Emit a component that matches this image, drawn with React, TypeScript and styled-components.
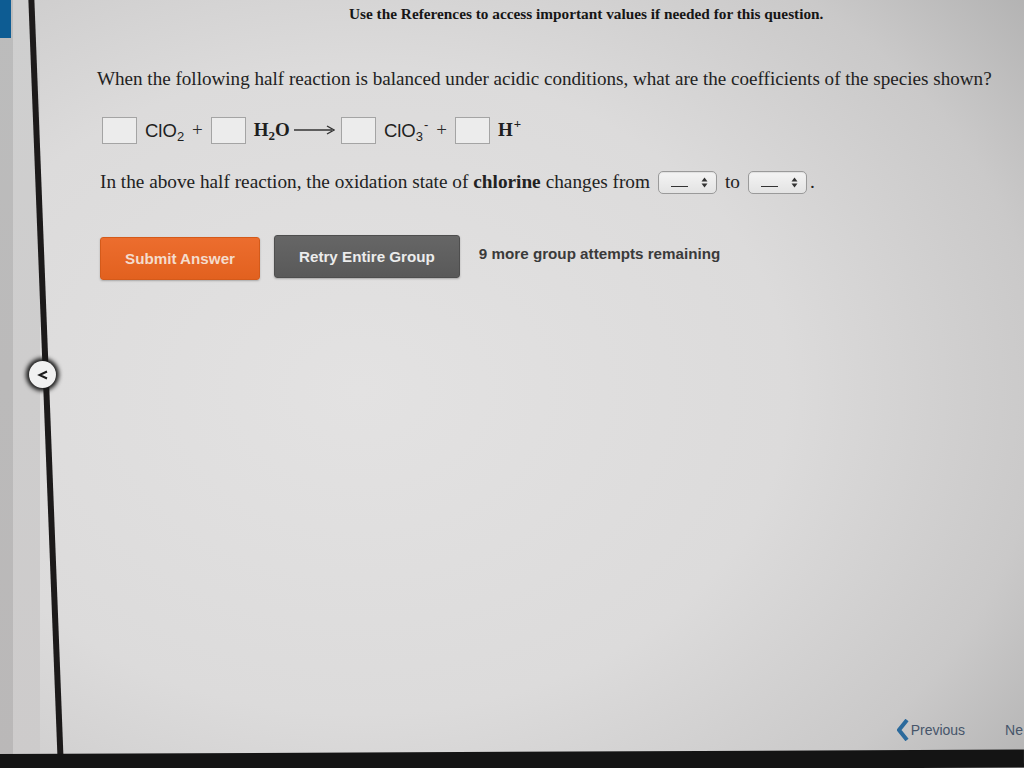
import React from "react";
import styled, { createGlobalStyle } from "styled-components";

const GlobalStyle = createGlobalStyle`
  html, body { margin: 0; padding: 0; }
  body { width: 1024px; height: 768px; overflow: hidden; background: #bdbdbd; }
`;

const Screen = styled.div`
  position: relative;
  width: 1024px;
  height: 768px;
  overflow: hidden;
  display: flex;
  background: radial-gradient(ellipse 950px 720px at 360px 390px, #e3e2e2 0%, #dcdbdb 45%, #cac9c9 72%, #a4a4a4 100%);
`;

const Rail = styled.div`
  width: 40px;
  flex: 0 0 40px;
  display: flex;
  background: linear-gradient(to bottom, #c6c6c6, #c3c1c1);
`;

const RailEdge = styled.div`
  width: 13px;
  background: linear-gradient(to bottom, #bcbcbc, #bab8b8);
`;

const RailInner = styled.div`
  flex: 1;
  background: linear-gradient(to bottom, #cfcfcf, #cdcbcb);
`;

const BlueTab = styled.div`
  position: absolute;
  left: 0;
  top: 0;
  width: 11px;
  height: 38px;
  background: #0d5c93;
`;

const Divider = styled.div`
  position: absolute;
  left: 28px;
  top: -10px;
  width: 6px;
  height: 800px;
  background: #1c1a1a;
  transform-origin: top left;
  transform: rotate(-2.2deg);
`;

const CollapseButton = styled.div`
  position: absolute;
  left: 29px;
  top: 361px;
  width: 27px;
  height: 27px;
  border-radius: 50%;
  background: #f1f1f1;
  box-shadow: 0 0 4px 3px #1a1a1a;
  display: flex;
  align-items: center;
  justify-content: center;
`;

const Bezel = styled.div`
  position: absolute;
  left: 0;
  right: 0;
  bottom: -4px;
  height: 18px;
  background: #141414;
  transform: rotate(-0.25deg);
  transform-origin: left bottom;
`;

const Content = styled.div`
  flex: 1;
  display: flex;
  flex-direction: column;
  padding-left: 57px;
  padding-top: 4px;
  position: relative;
`;

const Header = styled.div`
  font-family: "Liberation Serif", "Times New Roman", serif;
  font-weight: bold;
  font-size: 15.3px;
  color: #161616;
  padding-left: 252px;
  height: 19px;
  line-height: 19px;
`;

const Question = styled.p`
  font-family: "Liberation Serif", "Times New Roman", serif;
  font-size: 19.1px;
  color: #222;
  margin: 44px 0 0 0;
  line-height: 24px;
`;

const Equation = styled.div`
  display: flex;
  align-items: center;
  margin-top: 25px;
  margin-left: 5px;
  height: 28px;
`;

const CoefBox = styled.div`
  width: 33px;
  height: 25px;
  border: 1px solid #a4a4a4;
  background: #ececec;
  margin-right: 8px;
`;

const SansSpecies = styled.span`
  font-family: "Liberation Sans", Arial, sans-serif;
  font-size: 18.5px;
  color: #1e1e1e;
  position: relative;
  top: 1px;
`;

const SerifSpecies = styled.span`
  font-family: "Liberation Serif", "Times New Roman", serif;
  font-weight: bold;
  font-size: 19px;
  color: #1e1e1e;
`;

const Sub = styled.sub`
  font-size: 13px;
  vertical-align: -4px;
  line-height: 0;
`;

const Sup = styled.sup`
  font-size: 13px;
  vertical-align: 8px;
  line-height: 0;
  margin-left: 1px;
`;

const Plus = styled.span`
  font-family: "Liberation Serif", "Times New Roman", serif;
  font-size: 19px;
  color: #2a2a2a;
  margin: 0 8px 0 8px;
`;

const Arrow = styled.svg`
  margin: 0 6px 0 3px;
`;

const StateLine = styled.div`
  display: flex;
  align-items: center;
  margin-top: 25px;
  margin-left: 3px;
  font-family: "Liberation Serif", "Times New Roman", serif;
  font-size: 19.25px;
  color: #222;
  height: 26px;
`;

const Strong = styled.b`
  margin: 0 5px;
`;

const Select = styled.div`
  width: 59px;
  height: 23px;
  border: 1px solid #9a9a9a;
  border-radius: 5px;
  background: linear-gradient(to bottom, #f4f4f4, #e3e3e3);
  display: flex;
  align-items: center;
  justify-content: space-between;
  padding: 0 8px 0 12px;
  box-sizing: border-box;
  margin: 0 8px;
  box-shadow: inset 0 1px 1px rgba(0,0,0,0.08);
`;

const Blank = styled.span`
  width: 17px;
  height: 1px;
  background: #333;
  margin-top: 8px;
`;

const Period = styled.span`
  margin-left: -5px;
`;

const Buttons = styled.div`
  display: flex;
  align-items: center;
  gap: 14px;
  margin-top: 41px;
  margin-left: 3px;
`;

const Button = styled.div<{ $tone: "orange" | "grey" }>`
  display: flex;
  align-items: center;
  justify-content: center;
  height: 41px;
  padding: 0 24px;
  border-radius: 3px;
  font-family: "Liberation Sans", Arial, sans-serif;
  font-weight: bold;
  font-size: 15.2px;
  color: ${(p) => (p.$tone === "orange" ? "#f4dccd" : "#ececec")};
  background: ${(p) =>
    p.$tone === "orange"
      ? "linear-gradient(to bottom, #ec6d2e, #e2611f)"
      : "linear-gradient(to bottom, #666, #595959)"};
  border: 1px solid ${(p) => (p.$tone === "orange" ? "#d45a1a" : "#4e4e4e")};
  box-shadow: 0 1px 2px rgba(0,0,0,0.25);
  position: relative;
  top: ${(p) => (p.$tone === "orange" ? 1 : -1)}px;
`;

const Attempts = styled.span`
  font-family: "Liberation Sans", Arial, sans-serif;
  font-weight: bold;
  font-size: 15.2px;
  color: #3a3a3a;
  margin-left: 5px;
  position: relative;
  top: -4px;
`;

const Spacer = styled.div`
  flex: 1;
`;

const Pager = styled.div`
  display: flex;
  align-items: center;
  justify-content: flex-end;
  margin-bottom: 27px;
  margin-right: 1px;
  font-family: "Liberation Sans", Arial, sans-serif;
  font-size: 14px;
  color: #46556a;
`;

const PagerLink = styled.span<{ $gap: number }>`
  display: flex;
  align-items: center;
  margin-right: ${(p) => p.$gap}px;
`;

const PagerLabel = styled.span`
  margin-left: 2px;
`;

const UpDown = () => (
  <svg width="7" height="11" viewBox="0 0 7 11">
    <path d="M0.5 4.5 L3.5 0.5 L6.5 4.5 Z M0.5 6.5 L3.5 10.5 L6.5 6.5 Z" fill="#333" />
  </svg>
);

export default function App() {
  return (
    <>
      <GlobalStyle />
      <Screen>
        <Rail>
          <RailEdge />
          <RailInner />
        </Rail>
        <Content>
          <Header>Use the References to access important values if needed for this question.</Header>
          <Question>
            When the following half reaction is balanced under acidic conditions, what are the coefficients of the species shown?
          </Question>
          <Equation>
            <CoefBox />
            <SansSpecies>
              ClO<Sub>2</Sub>
            </SansSpecies>
            <Plus>+</Plus>
            <CoefBox />
            <SerifSpecies>
              H<Sub>2</Sub>O
            </SerifSpecies>
            <Arrow width="42" height="12" viewBox="0 0 42 12">
              <line x1="1" y1="6" x2="39" y2="6" stroke="#333" strokeWidth="1.4" />
              <path d="M34 2 L41 6 L34 10" fill="none" stroke="#333" strokeWidth="1.4" />
            </Arrow>
            <CoefBox />
            <SansSpecies>
              ClO<Sub>3</Sub>
              <Sup>-</Sup>
            </SansSpecies>
            <Plus>+</Plus>
            <CoefBox />
            <SerifSpecies>
              H<Sup>+</Sup>
            </SerifSpecies>
          </Equation>
          <StateLine>
            In the above half reaction, the oxidation state of<Strong>chlorine</Strong>changes from
            <Select>
              <Blank />
              <UpDown />
            </Select>
            to
            <Select>
              <Blank />
              <UpDown />
            </Select>
            <Period>.</Period>
          </StateLine>
          <Buttons>
            <Button $tone="orange">Submit Answer</Button>
            <Button $tone="grey">Retry Entire Group</Button>
            <Attempts>9 more group attempts remaining</Attempts>
          </Buttons>
          <Spacer />
          <Pager>
            <PagerLink $gap={40}>
              <svg width="12" height="22" viewBox="0 0 12 22">
                <path d="M10 1 L2 11 L10 21" fill="none" stroke="#2b6a9c" strokeWidth="4" strokeLinejoin="miter" />
              </svg>
              <PagerLabel>Previous</PagerLabel>
            </PagerLink>
            <PagerLink $gap={0}>Ne</PagerLink>
          </Pager>
        </Content>
        <BlueTab />
        <Divider />
        <CollapseButton>
          <svg width="12" height="10" viewBox="0 0 12 10">
            <path d="M10 1.5 L2.5 5 L10 8.5" fill="none" stroke="#1c1c1c" strokeWidth="2" />
          </svg>
        </CollapseButton>
        <Bezel />
      </Screen>
    </>
  );
}
